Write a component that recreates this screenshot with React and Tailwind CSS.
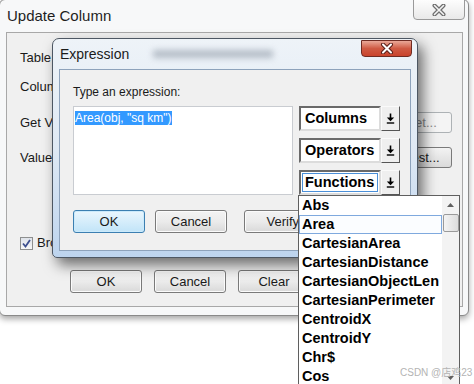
import React from 'react';

const FUNCS = [
    'Abs', 'Area', 'CartesianArea', 'CartesianDistance', 'CartesianObjectLen',
    'CartesianPerimeter', 'CentroidX', 'CentroidY', 'Chr$', 'Cos'
];

const DropArrow = () => (
    <svg width="9" height="11" viewBox="0 0 9 11">
        <path d="M4.5 0.5 V5" stroke="#000" strokeWidth="1.6" />
        <path d="M0.8 4.5 H8.2 L4.5 8.3 Z" fill="#000" />
        <path d="M0.8 10 H8.2" stroke="#000" strokeWidth="1.4" />
    </svg>
);

const WinButton = ({ children, focused, className = '' }) => (
    <div
        className={`flex items-center justify-center w-[72px] h-[23px] shrink-0 rounded-[3px] border text-[13px] text-[#1a1a1a] ${focused
            ? 'border-[#3c7fb1] bg-linear-to-b from-[#eaf6fd] to-[#c1e4f8] shadow-[inset_0_0_0_1px_#cbeafb]'
            : 'border-[#7a7a7a] bg-linear-to-b from-[#f3f3f3] via-[#ebebeb] to-[#d9d9d9] shadow-[inset_0_0_0_1px_#fbfbfb]'
            } ${className}`}
    >
        {children}
    </div>
);

const Combo = ({ label, focused }) => (
    <div className="flex h-[25px]">
        <div className="w-[82px] h-full bg-white border-2 border-t-[#6a6a6a] border-l-[#6a6a6a] border-b-[#dcdcdc] border-r-[#dcdcdc] flex items-center p-[1px]">
            {focused ? (
                <div className="flex-1 h-full border border-[#4a8fd8] flex items-center pl-[2px] text-[14.5px] font-bold text-black">{label}</div>
            ) : (
                <span className="pl-[3px] text-[14.5px] font-bold text-black">{label}</span>
            )}
        </div>
        <div className="w-[19px] h-full bg-[#efefef] border border-t-[#fafafa] border-l-[#fafafa] border-b-[#555] border-r-[#555] flex items-center justify-center">
            <DropArrow />
        </div>
    </div>
);

export default function App() {
    return (
        <div className="relative w-[474px] h-[384px] overflow-hidden bg-white font-['Liberation_Sans',Arial,sans-serif]">

            {/* Update Column window */}
            <div className="absolute left-[-1px] top-[-1px] w-[470px] h-[317px] rounded-[6px] border border-[#8a8a8a] bg-[#f7f8f9] shadow-[0_3px_6px_rgba(0,0,0,0.35)] flex flex-col px-[6px]">
                <div className="relative h-[32px] flex items-center pl-[1px] text-[15px] text-[#1e1e1e]">
                    Update Column
                    <div className="absolute left-[407px] top-[-1px] w-[52px] h-[21px] rounded-b-[4px] border border-[#9a9a9a] bg-linear-to-b from-[#fdfdfd] to-[#e9e9e9] flex items-center justify-center">
                        <svg width="14" height="12" viewBox="0 0 14 12">
                            <path d="M2.5 1.5 L11.5 10.5 M11.5 1.5 L2.5 10.5" stroke="#6e6e6e" strokeWidth="4" strokeLinecap="round" />
                            <path d="M2.5 1.5 L11.5 10.5 M11.5 1.5 L2.5 10.5" stroke="#f4f4f4" strokeWidth="1.6" strokeLinecap="round" />
                        </svg>
                    </div>
                </div>
                <div className="w-[457px] h-[275px] border border-[#a8a8a8] bg-[#f0f0f0] flex flex-col pt-[15px] pl-[13px] text-[13px] text-[#1a1a1a]">
                    <div className="h-[20px] flex items-center">Table</div>
                    <div className="h-[20px] mt-[9px] flex items-center">Column</div>
                    <div className="h-[21px] mt-[15px] flex items-center justify-between pr-[10px]">
                        <span>Get Value</span>
                        <div className="w-[52px] h-[21px] rounded-[3px] border border-[#adb2b5] bg-[#f4f4f4] flex items-center pl-[4px] text-[#8a8a8a]">Get...</div>
                    </div>
                    <div className="h-[21px] mt-[14px] flex items-center justify-between pr-[10px]">
                        <span>Value</span>
                        <div className="w-[52px] h-[21px] rounded-[3px] border border-[#7a7a7a] bg-linear-to-b from-[#f3f3f3] to-[#dadada] flex items-center pl-[4px]">Test...</div>
                    </div>
                    <div className="h-[16px] mt-[67px] flex items-center gap-[4px]">
                        <div className="w-[13px] h-[13px] border border-[#8e8f8f] bg-linear-to-b from-[#dfe3ea] to-[#f7f7f7] flex items-center justify-center">
                            <svg width="9" height="9" viewBox="0 0 9 9">
                                <path d="M1 4.5 L3.5 7.5 L8 1" stroke="#3d4f8f" strokeWidth="1.8" fill="none" />
                            </svg>
                        </div>
                        <span>Browse</span>
                    </div>
                    <div className="mt-[19px] flex gap-[12px] pl-[50px]">
                        <WinButton>OK</WinButton>
                        <WinButton>Cancel</WinButton>
                        <WinButton>Clear</WinButton>
                    </div>
                </div>
            </div>

            {/* Expression dialog */}
            <div className="absolute left-[52px] top-[38px] w-[366px] h-[220px] rounded-t-[7px] rounded-b-[5px] border border-[#4d5763] bg-linear-to-b from-[#eef3f8] via-[#dfe9f4] to-[#bdd4ee] shadow-[5px_7px_14px_rgba(0,0,0,0.55)] flex flex-col px-[6px] pb-[6px]">
                <div className="relative h-[30px] flex items-center pl-[1px] text-[14px] text-[#1b1b1b]">
                    Expression
                    <div className="ml-[24px] w-[120px] h-[8px] bg-[#8f99a6] opacity-60 blur-[3px]" />
                    <div className="absolute left-[302px] top-[1px] w-[51px] h-[17px] rounded-b-[4px] border border-[#6f2b22] bg-linear-to-b from-[#e9a898] via-[#cf5a43] to-[#c9432c] flex items-center justify-center">
                        <svg width="14" height="11" viewBox="0 0 14 11">
                            <path d="M3 1.5 L11 9.5 M11 1.5 L3 9.5" stroke="#5a1e18" strokeWidth="4" strokeLinecap="round" />
                            <path d="M3 1.5 L11 9.5 M11 1.5 L3 9.5" stroke="#fff" strokeWidth="2" strokeLinecap="round" />
                        </svg>
                    </div>
                </div>
                <div className="flex-1 border border-[#8da2bb] bg-[#f0f0f0] flex flex-col pt-[14px] pl-[13px] text-[13px] text-[#1a1a1a]">
                    <div className="h-[16px] flex items-center text-[12px]">Type an expression:</div>
                    <div className="flex mt-[6px]">
                        <div className="w-[220px] h-[89px] bg-white border border-[#c9ccd1] pt-[2px] pl-[1px] text-[12px]">
                            <span className="bg-[#3399ff] text-white">Area(obj, "sq km")</span>
                        </div>
                        <div className="ml-[6px] flex flex-col gap-[7px]">
                            <Combo label="Columns" />
                            <Combo label="Operators" />
                            <Combo label="Functions" focused />
                        </div>
                    </div>
                    <div className="mt-[15px] flex">
                        <WinButton focused>OK</WinButton>
                        <WinButton className="ml-[10px]">Cancel</WinButton>
                        <WinButton className="ml-[17px] justify-end pr-[16px]">Verify</WinButton>
                    </div>
                </div>
            </div>

            {/* Functions dropdown list */}
            <div className="absolute left-[298px] top-[195px] w-[162px] h-[200px] bg-white border border-[#5f5f5f] flex">
                <div className="flex-1 flex flex-col">
                    {FUNCS.map((name, i) => (
                        <div
                            key={name}
                            className={`h-[19px] shrink-0 flex items-center pl-[2px] text-[14.5px] font-bold text-black whitespace-nowrap ${i === 1 ? 'border border-[#7fa9de] bg-[#fbfdff]' : 'border border-transparent'}`}
                        >
                            {name}
                        </div>
                    ))}
                </div>
                <div className="w-[17px] h-[188px] bg-[#f3f3f3] flex flex-col items-center">
                    <div className="h-[18px] flex items-center justify-center">
                        <svg width="7" height="4" viewBox="0 0 7 4"><path d="M0 4 L3.5 0 L7 4 Z" fill="#606060" /></svg>
                    </div>
                    <div className="w-[16px] h-[18px] rounded-[2px] border border-[#9a9a9a] bg-linear-to-r from-[#f4f4f4] to-[#dcdcdc]" />
                    <div className="flex-1" />
                    <div className="h-[12px] flex items-center justify-center">
                        <svg width="7" height="4" viewBox="0 0 7 4"><path d="M0 0 L3.5 4 L7 0 Z" fill="#606060" /></svg>
                    </div>
                </div>
            </div>

            {/* watermark */}
            <div className="absolute left-[400px] top-[365px] text-[10px] text-[#b4b4b4] font-['Liberation_Sans','Noto_Sans_CJK_SC',sans-serif] whitespace-nowrap">
                CSDN @店鸡23
            </div>
        </div>
    );
}
